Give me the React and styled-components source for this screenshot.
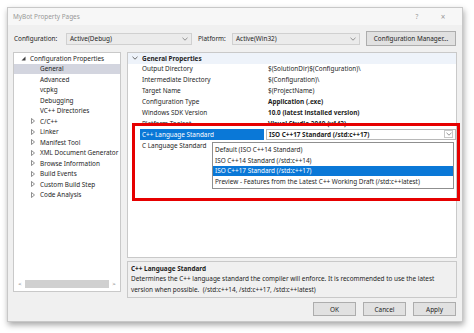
import React from "react";
import styled, { createGlobalStyle } from "styled-components";

const GlobalStyle = createGlobalStyle`
  html, body { margin: 0; padding: 0; background: #ffffff; }
  body { font-family: "Noto Sans", "Open Sans", sans-serif; font-size: 6.4px; color: #1e1e1e; }
  * { box-sizing: border-box; }
`;

const Page = styled.div`
  position: relative;
  width: 474px;
  height: 333px;
  padding: 7px 11px 0 7px;
  overflow: hidden;
`;

const Window = styled.div`
  width: 456px;
  height: 315px;
  background: #f0f0f0;
  border: 1px solid #c8c8c8;
  box-shadow: 1px 3px 6px rgba(0, 0, 0, 0.35);
  display: flex;
  flex-direction: column;
  padding: 0 5px;
`;

const TitleBar = styled.div`
  height: 17px;
  display: flex;
  align-items: center;
  color: #979797;
  font-size: 6.4px;
  margin: 0 -5px;
  padding: 0 6px 0 5px;
  background: #f7f7f7;
`;

const TitleText = styled.span`
  flex: 1;
`;

const TitleButton = styled.span`
  width: 26px;
  text-align: center;
  color: #9a9a9a;
  font-size: ${(p) => p.$size || 7}px;
`;

const Toolbar = styled.div`
  height: 27px;
  display: flex;
  align-items: center;
  padding-left: 1px;
`;

const Label = styled.span`
  width: ${(p) => p.$w}px;
  flex-shrink: 0;
`;

const Combo = styled.div`
  width: ${(p) => p.$w}px;
  height: 12px;
  background: #ebebeb;
  border: 1px solid #d0d0d0;
  display: flex;
  align-items: center;
  padding: 0 3px;
  margin-right: ${(p) => p.$mr || 0}px;
  span { flex: 1; }
`;

const Button = styled.div`
  width: ${(p) => p.$w}px;
  height: ${(p) => p.$h || 15}px;
  background: #e1e1e1;
  border: 1px solid #adadad;
  display: flex;
  align-items: center;
  justify-content: center;
  flex-shrink: 0;
`;

const Main = styled.div`
  display: flex;
  align-items: flex-start;
  gap: 6px;
`;

const Tree = styled.div`
  width: 108px;
  height: 240px;
  background: #ffffff;
  border: 1px solid #c9c9c9;
  display: flex;
  flex-direction: column;
`;

const TreeItems = styled.div`
  flex: 1;
`;

const TreeRow = styled.div`
  height: 10.5px;
  display: flex;
  align-items: center;
  padding-left: ${(p) => p.$indent}px;
  background: ${(p) => (p.$selected ? "#d3d5df" : "transparent")};
  white-space: nowrap;
`;

const Arrow = styled.span`
  width: 9px;
  display: inline-flex;
  align-items: center;
`;

const HScroll = styled.div`
  height: 10px;
  margin: 0 1px 2px;
  display: flex;
  align-items: center;
  color: #606060;
  font-size: 6px;
`;

const ScrollBtn = styled.span`
  width: 10px;
  text-align: center;
`;

const Thumb = styled.div`
  flex: 1;
  height: 8px;
  background: #d0d0d0;
`;

const RightCol = styled.div`
  flex: 1;
  display: flex;
  flex-direction: column;
  gap: 3px;
`;

const Grid = styled.div`
  position: relative;
  height: 206px;
  background: #ffffff;
  border: 1px solid #c9c9c9;
`;

const Header = styled.div`
  height: 10.5px;
  display: flex;
  align-items: center;
  background: #eef3fa;
  font-weight: 700;
  padding-left: 4px;
  span:first-child { width: 10px; display: inline-flex; }
`;

const Row = styled.div`
  height: 10.9px;
  display: grid;
  grid-template-columns: 124px 1fr;
  column-gap: 2px;
  padding-left: 12px;
  align-items: stretch;
`;

const NameCell = styled.div`
  display: flex;
  align-items: center;
  padding-left: 2px;
  background: ${(p) => (p.$selected ? "#0a78d7" : "transparent")};
  color: ${(p) => (p.$selected ? "#ffffff" : "inherit")};
  white-space: nowrap;
`;

const ValueCell = styled.div`
  display: flex;
  align-items: center;
  padding-left: 2px;
  padding-right: 2px;
  font-weight: ${(p) => (p.$bold ? 700 : 400)};
  white-space: nowrap;
  overflow: hidden;
  border: ${(p) => (p.$combo ? "1px solid #b8b8b8" : "none")};
  span { flex: 1; }
`;

const ChevBox = styled.div`
  width: 9px;
  height: 8px;
  border: 1px solid #c8c8c8;
  display: flex;
  align-items: center;
  justify-content: center;
`;

const DropList = styled.div`
  position: absolute;
  left: 84px;
  top: 89px;
  width: 242px;
  background: #ffffff;
  border: 1px solid #8f8f8f;
  padding: 1px 0;
  z-index: 2;
`;

const DropItem = styled.div`
  height: 10.8px;
  display: flex;
  align-items: center;
  padding-left: 2px;
  background: ${(p) => (p.$selected ? "#0a78d7" : "transparent")};
  color: ${(p) => (p.$selected ? "#ffffff" : "inherit")};
  white-space: nowrap;
`;

const Description = styled.div`
  height: 37px;
  border: 1px solid #c9c9c9;
  background: #f0f0f0;
  padding: 2px 3px;
  line-height: 10.4px;
  b { font-weight: 700; }
`;

const Footer = styled.div`
  flex: 1;
  display: flex;
  justify-content: flex-end;
  align-items: center;
  gap: 7px;
  padding-right: 1px;
  padding-bottom: 1px;
`;

const RedBox = styled.div`
  position: absolute;
  left: 132px;
  top: 123px;
  width: 328px;
  height: 78px;
  border: 3px solid #e60000;
  z-index: 5;
  pointer-events: none;
`;

const Chevron = ({ color = "#777" }) => (
  <svg width="6" height="4" viewBox="0 0 6 4">
    <polyline points="0.5,0.8 3,3.2 5.5,0.8" fill="none" stroke={color} strokeWidth="0.8" />
  </svg>
);

const Expanded = () => (
  <svg width="5" height="5" viewBox="0 0 5 5">
    <polygon points="4.5,0.5 4.5,4.5 0.5,4.5" fill="#404040" />
  </svg>
);

const Collapsed = () => (
  <svg width="4" height="6" viewBox="0 0 4 6">
    <polygon points="0.5,0.5 3.5,3 0.5,5.5" fill="none" stroke="#606060" strokeWidth="0.7" />
  </svg>
);

const leaves = ["General", "Advanced", "vcpkg", "Debugging", "VC++ Directories"];
const branches = [
  "C/C++",
  "Linker",
  "Manifest Tool",
  "XML Document Generator",
  "Browse Information",
  "Build Events",
  "Custom Build Step",
  "Code Analysis",
];

const props = [
  ["Output Directory", "$(SolutionDir)$(Configuration)\\"],
  ["Intermediate Directory", "$(Configuration)\\"],
  ["Target Name", "$(ProjectName)"],
  ["Configuration Type", "Application (.exe)", true],
  ["Windows SDK Version", "10.0 (latest installed version)", true],
  ["Platform Toolset", "Visual Studio 2019 (v142)", true],
];

const options = [
  "Default (ISO C++14 Standard)",
  "ISO C++14 Standard (/std:c++14)",
  "ISO C++17 Standard (/std:c++17)",
  "Preview - Features from the Latest C++ Working Draft (/std:c++latest)",
];

export default function App() {
  return (
    <Page>
      <GlobalStyle />
      <Window>
        <TitleBar>
          <TitleText>MyBot Property Pages</TitleText>
          <TitleButton $size={6.4}>?</TitleButton>
          <TitleButton $size={8}>×</TitleButton>
        </TitleBar>

        <Toolbar>
          <Label $w={52}>Configuration:</Label>
          <Combo $w={126} $mr={6}>
            <span>Active(Debug)</span>
            <Chevron />
          </Combo>
          <Label $w={34}>Platform:</Label>
          <Combo $w={128} $mr={6}>
            <span>Active(Win32)</span>
            <Chevron />
          </Combo>
          <Button $w={90}>Configuration Manager...</Button>
        </Toolbar>

        <Main>
          <Tree>
            <TreeItems>
              <TreeRow $indent={7}>
                <Arrow><Expanded /></Arrow>
                Configuration Properties
              </TreeRow>
              {leaves.map((l) => (
                <TreeRow key={l} $indent={26} $selected={l === "General"}>
                  {l}
                </TreeRow>
              ))}
              {branches.map((b) => (
                <TreeRow key={b} $indent={17}>
                  <Arrow><Collapsed /></Arrow>
                  {b}
                </TreeRow>
              ))}
            </TreeItems>
            <HScroll>
              <ScrollBtn>&lt;</ScrollBtn>
              <Thumb />
              <ScrollBtn>&gt;</ScrollBtn>
            </HScroll>
          </Tree>

          <RightCol>
            <Grid>
              <Header>
                <span><Chevron color="#444" /></span>
                <span>General Properties</span>
              </Header>
              {props.map(([n, v, bold]) => (
                <Row key={n}>
                  <NameCell>{n}</NameCell>
                  <ValueCell $bold={bold}>{v}</ValueCell>
                </Row>
              ))}
              <Row>
                <NameCell $selected>C++ Language Standard</NameCell>
                <ValueCell $bold $combo>
                  <span>ISO C++17 Standard (/std:c++17)</span>
                  <ChevBox><Chevron /></ChevBox>
                </ValueCell>
              </Row>
              <Row>
                <NameCell>C Language Standard</NameCell>
                <ValueCell />
              </Row>
              <DropList>
                {options.map((o, i) => (
                  <DropItem key={o} $selected={i === 2}>{o}</DropItem>
                ))}
              </DropList>
            </Grid>
            <Description>
              <b>C++ Language Standard</b>
              <div>
                Determines the C++ language standard the compiler will enforce. It is recommended to use the latest
                version when possible.&nbsp; (/std:c++14, /std:c++17, /std:c++latest)
              </div>
            </Description>
          </RightCol>
        </Main>

        <Footer>
          <Button $w={43} $h={14}>OK</Button>
          <Button $w={43} $h={14}>Cancel</Button>
          <Button $w={43} $h={14}>Apply</Button>
        </Footer>
      </Window>
      <RedBox />
    </Page>
  );
}
